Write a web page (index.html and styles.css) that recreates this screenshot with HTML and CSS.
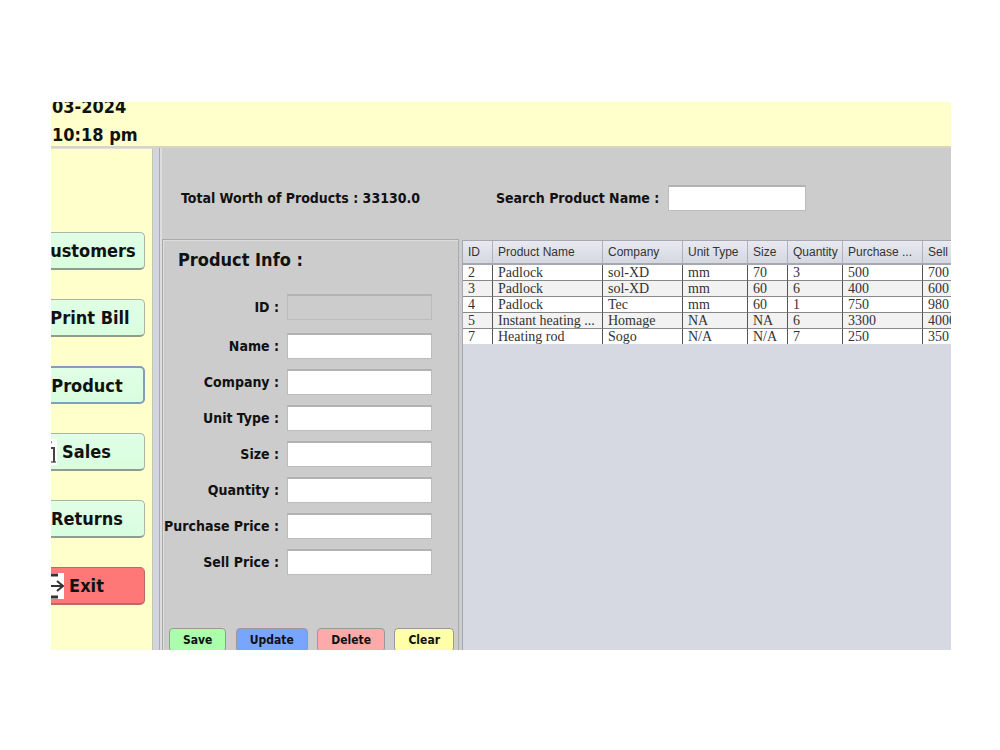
FILE: index.html
```
<!DOCTYPE html>
<html lang="en">
<head>
  <meta charset="UTF-8">
  <meta name="viewport" content="width=device-width, initial-scale=1.0">
  <title>Product</title>
  <link rel="stylesheet" href="styles.css">
</head>
<body>
  <div class="window">
    <header class="topbar">
      <div class="date">03-2024</div>
      <div>10:18 pm</div>
    </header>

    <div class="content">
      <!-- Side menu -->
      <nav class="sidebar">
        <button type="button" class="menu-btn spaced">Customers</button>
        <button type="button" class="menu-btn spaced-wide">Print Bill</button>
        <button type="button" class="menu-btn spaced active">Product</button>
        <button type="button" class="menu-btn">
          <svg width="32" height="26" viewBox="0 0 32 26" aria-hidden="true">
            <rect width="32" height="26" fill="#fff"/>
            <path d="M3 23h28" stroke="#888" stroke-width="2"/>
            <path d="M6 22v-6h3v6M15 22v-9h3v9" fill="none" stroke="#444" stroke-width="2"/>
            <path d="M24 9h5v14" fill="none" stroke="#444" stroke-width="2"/>
            <path d="M24 4l3-1" stroke="#888" stroke-width="2"/>
          </svg>
          Sales
        </button>
        <button type="button" class="menu-btn spaced">Returns</button>
        <button type="button" class="menu-btn exit">
          <svg width="32" height="26" viewBox="0 0 32 26" aria-hidden="true">
            <rect width="32" height="26" fill="#fff"/>
            <path d="M26 2H6v22h20" fill="none" stroke="#333" stroke-width="3"/>
            <path d="M12 13h18M25 8l6 5-6 5" fill="none" stroke="#333" stroke-width="2"/>
          </svg>
          Exit
        </button>
      </nav>

      <main class="main">
        <div class="summary">
          <div class="worth">Total Worth of Products : 33130.0</div>
          <label for="search">Search Product Name :</label>
          <input type="text" id="search">
        </div>

        <div class="panels">
          <!-- Product form -->
          <form class="product-form">
            <h2>Product Info :</h2>
            <div class="row first"><label for="pid">ID :</label><input type="text" id="pid" disabled></div>
            <div class="row"><label for="name">Name :</label><input type="text" id="name"></div>
            <div class="row"><label for="company">Company :</label><input type="text" id="company"></div>
            <div class="row"><label for="unit">Unit Type :</label><input type="text" id="unit"></div>
            <div class="row"><label for="size">Size :</label><input type="text" id="size"></div>
            <div class="row"><label for="quantity">Quantity :</label><input type="text" id="quantity"></div>
            <div class="row"><label for="purchase">Purchase Price :</label><input type="text" id="purchase"></div>
            <div class="row"><label for="sell">Sell Price :</label><input type="text" id="sell"></div>
            <div class="actions">
              <button type="button" class="save">Save</button>
              <button type="button" class="update">Update</button>
              <button type="button" class="delete">Delete</button>
              <button type="button" class="clear">Clear</button>
            </div>
          </form>

          <!-- Product list -->
          <div class="table-wrap">
            <table>
              <colgroup>
                <col class="c-id"><col class="c-name"><col class="c-company"><col class="c-unit">
                <col class="c-size"><col class="c-qty"><col class="c-price"><col class="c-price">
              </colgroup>
              <thead>
                <tr><th>ID</th><th>Product Name</th><th>Company</th><th>Unit Type</th><th>Size</th><th>Quantity</th><th>Purchase ...</th><th>Sell</th></tr>
              </thead>
              <tbody>
                <tr><td>2</td><td>Padlock</td><td>sol-XD</td><td>mm</td><td>70</td><td>3</td><td>500</td><td>700</td></tr>
                <tr><td>3</td><td>Padlock</td><td>sol-XD</td><td>mm</td><td>60</td><td>6</td><td>400</td><td>600</td></tr>
                <tr><td>4</td><td>Padlock</td><td>Tec</td><td>mm</td><td>60</td><td>1</td><td>750</td><td>980</td></tr>
                <tr><td>5</td><td>Instant heating ...</td><td>Homage</td><td>NA</td><td>NA</td><td>6</td><td>3300</td><td>4000</td></tr>
                <tr><td>7</td><td>Heating rod</td><td>Sogo</td><td>N/A</td><td>N/A</td><td>7</td><td>250</td><td>350</td></tr>
              </tbody>
            </table>
          </div>
        </div>
      </main>
    </div>
  </div>
</body>
</html>
```
FILE: styles.css
```
* {
  box-sizing: border-box;
}

body {
  margin: 0;
  height: 100vh;
  padding: 102px 49px 100px 51px;
  background: #fff;
  color: #111;
  font-family: "DejaVu Sans Condensed", "DejaVu Sans", sans-serif;
  font-weight: bold;
  font-size: 14px;
}

button,
input {
  font: inherit;
  color: inherit;
}

.window {
  display: flex;
  flex-direction: column;
  height: 100%;
  overflow: hidden;
  background: #ccc;
}

.topbar {
  flex: none;
  height: 46px;
  padding-left: 1px;
  overflow: hidden;
  border-bottom: 2px solid #d6d6c0;
  background: #ffffcc;
  font-size: 18px;
  line-height: 28px;
  white-space: nowrap;
}

.date {
  margin-top: -9px;
}

.content {
  display: flex;
  flex: 1;
  min-height: 0;
}

.sidebar {
  display: flex;
  flex-direction: column;
  gap: 29px;
  flex: none;
  width: 102px;
  padding-top: 83px;
  overflow: hidden;
  background: #ffffcc;
  border-top: 1px solid #e0e0d0;
  border-right: 1px solid #c4c4a8;
}

/* the menu is scrolled partly out of view on the left */
.menu-btn {
  display: flex;
  align-items: center;
  justify-content: center;
  gap: 5px;
  flex: none;
  width: 154px;
  height: 38px;
  margin-left: -60px;
  padding: 0;
  border: 1px solid #a8b5a8;
  border-bottom: 2px solid #8f9c90;
  border-radius: 5px;
  background: linear-gradient(#e0ffe6, #d9fddf);
  font-size: 18px;
  white-space: nowrap;
}

.menu-btn.spaced {
  padding-left: 38px;
}

.menu-btn.spaced-wide {
  padding-left: 44px;
}

.menu-btn.active {
  border: 2px solid #809fb8;
}

.menu-btn.exit {
  background: #ff7878;
  border-color: #b86a6a;
}

.main {
  display: flex;
  flex-direction: column;
  flex: 1;
  min-width: 0;
  border-left: 6px solid #d3d5de;
  box-shadow: inset 1px 0 #aaa, inset 3px 0 #ddd;
}

.summary {
  display: flex;
  align-items: center;
  flex: none;
  height: 91px;
  padding: 8px 0 0 22px;
  white-space: nowrap;
}

.worth {
  width: 315px;
}

.summary label {
  width: 172px;
}

input {
  width: 145px;
  height: 26px;
  padding: 2px 4px;
  border: 1px solid #bcbcbc;
  border-top: 2px solid #b2b2b2;
  border-radius: 0;
  background: #fff;
}

.summary input {
  width: 138px;
}

.panels {
  display: flex;
  flex: 1;
  min-height: 0;
}

.product-form {
  flex: none;
  width: 297px;
  margin-left: 3px;
  border: 1px solid #aaa;
  border-bottom: 0;
  box-shadow: inset 1px 1px #ddd;
}

.product-form h2 {
  margin: 0;
  padding: 8px 0 0 15px;
  font-size: 18px;
  line-height: 24px;
}

.row {
  display: flex;
  align-items: center;
  gap: 8px;
  height: 36px;
}

.row.first {
  height: 42px;
  margin-top: 14px;
}

.row label {
  width: 116px;
  text-align: right;
  white-space: nowrap;
}

.row input:disabled {
  background: #ccc;
}

.actions {
  display: flex;
  justify-content: space-between;
  margin-top: 48px;
  padding: 0 4px 0 6px;
}

.actions button {
  height: 24px;
  padding: 0 13px;
  border: 1px solid #999;
  border-radius: 4px;
  font-size: 12px;
}

.save {
  background: #aaffaa;
}

.update {
  background: #78a5ff;
}

.delete {
  background: #ffaaaa;
}

.clear {
  background: #ffffaa;
}

.table-wrap {
  flex: 1;
  min-width: 0;
  margin: 1px 0 0 3px;
  border: 1px solid #a5a8b2;
  border-right: 0;
  border-bottom: 0;
  overflow: hidden;
  background: #d6d9e2;
}

table {
  width: 540px;
  table-layout: fixed;
  border-collapse: separate;
  border-spacing: 0;
  color: #333;
}

.c-id {
  width: 30px;
}

.c-name {
  width: 110px;
}

.c-company,
.c-price {
  width: 80px;
}

.c-unit {
  width: 65px;
}

.c-size {
  width: 40px;
}

.c-qty {
  width: 55px;
}

th,
td {
  padding: 0 0 0 5px;
  text-align: left;
  font-weight: normal;
  white-space: nowrap;
  overflow: hidden;
}

th {
  height: 24px;
  border-right: 1px solid #aeb1ba;
  border-bottom: 2px solid #a6a8b0;
  background: linear-gradient(#e8eaf0, #d4d7e0);
  font-family: "Liberation Sans", Arial, sans-serif;
  font-size: 12px;
}

td {
  height: 16px;
  border-right: 1px solid #555;
  border-bottom: 1px solid #888;
  background: #fff;
  font-family: "Liberation Serif", "Times New Roman", serif;
  font-size: 14px;
  line-height: 15px;
}

tbody tr:nth-child(even) td {
  background: #f2f2f2;
}

tbody tr:last-child td {
  height: 15px;
  border-bottom: 0;
}
```
